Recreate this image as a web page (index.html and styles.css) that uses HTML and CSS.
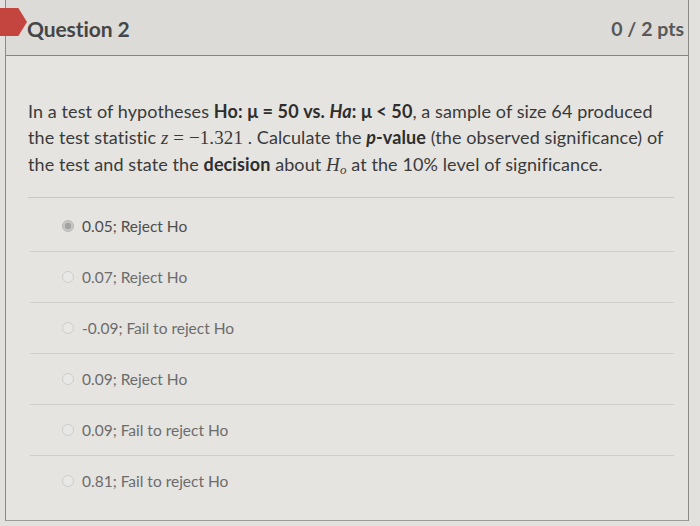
FILE: index.html
```html
<!DOCTYPE html>
<html>
<head>
<meta charset="utf-8">
<link rel="stylesheet" href="styles.css">
</head>
<body>
<div class="page">
  <div class="card">
    <div class="header">
      <span class="badge"></span>
      <h2 class="title">Question 2</h2>
      <span class="pts">0 / 2 pts</span>
    </div>
    <div class="body">
      <p class="question">In a test of hypotheses <b>Ho: μ = 50 vs. <i>Ha</i>: μ &lt; 50</b>, a sample of size 64 produced<br>the test statistic <span class="math">z</span><span class="mathr">&#8197;=&#8197;−1.321</span> . Calculate the <b><i>p</i>-value</b> (the observed significance) of<br>the test and state the <b>decision</b> about <span class="math">H<sub>o</sub></span> at the 10% level of significance.</p>
      <div class="answers">
        <div class="answer selected"><span class="radio"></span><span class="label">0.05; Reject Ho</span></div>
        <div class="answer"><span class="radio"></span><span class="label">0.07; Reject Ho</span></div>
        <div class="answer"><span class="radio"></span><span class="label">-0.09; Fail to reject Ho</span></div>
        <div class="answer"><span class="radio"></span><span class="label">0.09; Reject Ho</span></div>
        <div class="answer"><span class="radio"></span><span class="label">0.09; Fail to reject Ho</span></div>
        <div class="answer"><span class="radio"></span><span class="label">0.81; Fail to reject Ho</span></div>
      </div>
    </div>
  </div>
</div>
</body>
</html>
```
FILE: styles.css
```css
html, body {
  margin: 0;
  padding: 0;
  background: #dcdad6;
}
body {
  font-family: Lato, "Open Sans", sans-serif;
  color: #3b3b3b;
}
.page {
  width: 700px;
  height: 526px;
  overflow: hidden;
  background: #e2e1de;
}
.card {
  position: relative;
  margin-left: 5px;
  width: 682px;
  height: 520px;
  border-left: 1px solid #8a8a88;
  border-right: 1px solid #8a8a88;
  border-bottom: 1px solid #9a9a98;
  background: #e5e4e1;
}
.header {
  height: 56px;
  display: flex;
  align-items: center;
  justify-content: space-between;
  padding: 2px 4px 0 21px;
  background: #dddbd7;
  border-bottom: 1px solid #858583;
  box-sizing: border-box;
}
.badge {
  position: absolute;
  left: -6px;
  top: 8px;
  width: 27px;
  height: 28px;
  background: #c4443f;
  clip-path: polygon(0 0, 68% 0, 100% 50%, 68% 100%, 0 100%);
}
.title {
  margin: 0;
  font-size: 21px;
  font-weight: 700;
  color: #454548;
  letter-spacing: -0.1px;
}
.pts {
  font-size: 19.5px;
  font-weight: 700;
  color: #58585a;
}
.body {
  padding: 42px 14px 0 22px;
}
.question {
  margin: 0;
  font-size: 18px;
  line-height: 26px;
  letter-spacing: 0.1px;
  white-space: nowrap;
  color: #3a3a3a;
  padding-bottom: 19px;
  border-bottom: 1px solid #c9c8c5;
}
.question b {
  font-weight: 700;
  color: #2e2e2e;
}
.math {
  font-family: "Liberation Serif", "DejaVu Serif", serif;
  font-style: italic;
  font-size: 19px;
}
.mathr {
  font-family: "Liberation Serif", "DejaVu Serif", serif;
  font-size: 19px;
}
.math sub {
  font-size: 13px;
  line-height: 0;
  vertical-align: -3px;
}
.answers {
  padding-left: 2px;
}
.answer {
  height: 50px;
  display: flex;
  align-items: center;
  gap: 8px;
  padding-left: 32px;
  border-bottom: 1px solid #cfcecb;
}
.answer:first-child {
  height: 54px;
  padding-top: 2px;
  box-sizing: border-box;
}
.answer:last-child {
  border-bottom: none;
}
.radio {
  width: 10px;
  height: 10px;
  border-radius: 50%;
  border: 1px solid #cdcdcb;
  background: #e8e8e6;
  flex: none;
}
.selected .radio {
  background: radial-gradient(circle, #a3a3a3 0 3px, #c6c6c4 3.5px 100%);
  border-color: #b8b8b6;
}
.label {
  font-size: 15.5px;
  color: #6c6c6c;
}
.selected .label {
  color: #4e4e4e;
}
```
